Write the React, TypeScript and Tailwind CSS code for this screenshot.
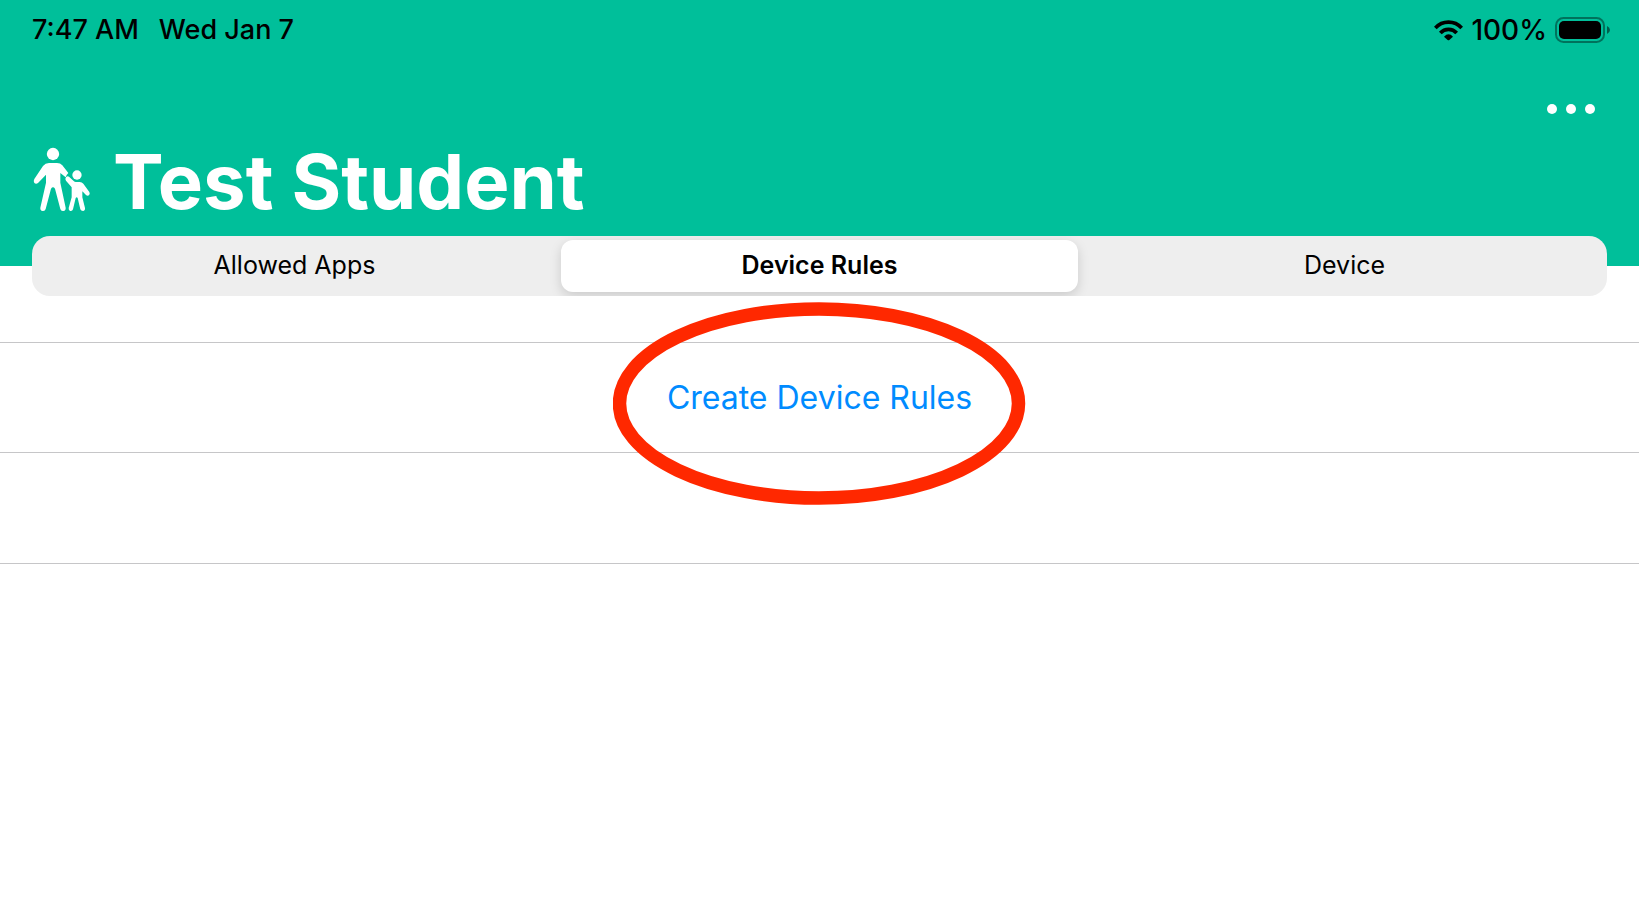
import React from "react";

function WifiIcon() {
  return (
    <svg viewBox="0 0 87 63" className="h-[21px] w-[29px]" aria-hidden="true">
      <g fill="none" stroke="#000" strokeWidth="11">
        <path d="M4 24 A53 53 0 0 1 83 24" />
        <path d="M19 39 A33 33 0 0 1 68 39" />
      </g>
      <path d="M30 50 Q43.500 36 57 50 L46 60 Q43.500 62 41 60 Z" fill="#000" />
    </svg>
  );
}

function BatteryIcon() {
  return (
    <svg viewBox="0 0 55 26" className="h-[26px] w-[55px]" aria-hidden="true">
      <rect x="1" y="1" width="48" height="24" rx="7.500" fill="none" stroke="#000" strokeOpacity="0.4" strokeWidth="2" />
      <rect x="4" y="4" width="42" height="18" rx="5" fill="#000" />
      <path d="M52 9 Q55 10.500 55 13 Q55 15.500 52 17 Z" fill="#000" fillOpacity="0.5" />
    </svg>
  );
}

function FamilyIcon() {
  return (
    <svg viewBox="40 53 174 195" className="h-[65px] w-[58px]" fill="#fff" aria-hidden="true">
      <circle cx="100" cy="74" r="18.500" />
      <path d="M88 101 H112 Q122 101 128 108 L146 131 Q140 136 138 144 L122 131 V160 L138 235 Q139 244 131 245 Q124 246 122 239 L106 178 Q100 170 94 178 L78 239 Q76 246 69 245 Q61 244 62 235 L79 160 V136 L55 161 Q49 166 44 161 Q40 156 44 149 L70 110 Q77 101 88 101 Z" />
      <circle cx="172" cy="137" r="14" />
      <path d="M148 142 L162 155 Q165 158 168 158 H180 Q187 158 191 163 L209 188 Q212 194 208 198 Q203 201 199 197 L188 186 V204 L196 236 Q197 244 190 245 Q184 245 182 240 L174 206 Q171 201 168 206 L160 240 Q158 246 152 245 Q146 243 147 236 L156 204 V174 L139 154 Q135 149 139 144 Q143 139 148 142 Z" />
    </svg>
  );
}

const tabs = ["Allowed Apps", "Device Rules", "Device"];

export default function App() {
  const [active, setActive] = React.useState("Device Rules");
  return (
    <div className="min-h-screen bg-white font-['Inter',sans-serif] text-black">
      <header className="bg-[#00bf9a] px-8 pt-3">
        <div className="flex items-center justify-between leading-9 font-medium">
          <div className="flex gap-5 text-[27px]">
            <time>7:47 AM</time>
            <span>Wed Jan 7</span>
          </div>
          <div className="-mr-[3px] flex items-center gap-2 text-[28px]">
            <WifiIcon />
            <span>100%</span>
            <BatteryIcon />
          </div>
        </div>
        <div className="flex justify-end pt-[45px] pr-3">
          <button type="button" aria-label="More options" className="flex h-8 items-center gap-[9px]">
            <i className="size-[10px] rounded-full bg-white" />
            <i className="size-[10px] rounded-full bg-white" />
            <i className="size-[10px] rounded-full bg-white" />
          </button>
        </div>
        <div className="flex items-center gap-[22px] pt-3 pb-[41px] pl-px text-white">
          <div className="pb-[3px]">
            <FamilyIcon />
          </div>
          <h1 className="text-[76px] leading-[88px] font-bold">Test Student</h1>
        </div>
      </header>
      <main>
        <div className="px-8">
          <div
            role="tablist"
            className="-mt-[30px] grid h-[60px] grid-cols-3 gap-2 overflow-hidden rounded-[18px] bg-[#eeeeee] p-1"
          >
            {tabs.map((tab) => (
              <button
                key={tab}
                type="button"
                role="tab"
                aria-selected={tab === active}
                onClick={() => setActive(tab)}
                className={
                  tab === active
                    ? "rounded-xl bg-white text-[25px] font-semibold shadow-[0_4px_12px_rgba(0,0,0,0.15)]"
                    : "rounded-xl text-[25px]"
                }
              >
                {tab}
              </button>
            ))}
          </div>
        </div>
        <ul className="mt-[46px] border-t border-[#c6c6c8]">
          <li className="relative border-b border-[#c6c6c8]">
            <button type="button" className="h-[109px] w-full text-[32px] text-[#008bff]">
              Create Device Rules
            </button>
            <svg
              viewBox="0 0 414 203"
              className="pointer-events-none absolute inset-x-0 -top-[41px] mx-auto h-[203px] w-[414px]"
              aria-hidden="true"
            >
              <ellipse cx="206" cy="101.500" rx="199.500" ry="94.500" fill="none" stroke="#ff2800" strokeWidth="13.500" />
            </svg>
          </li>
          <li className="h-[111px] border-b border-[#c6c6c8]" />
        </ul>
      </main>
    </div>
  );
}
